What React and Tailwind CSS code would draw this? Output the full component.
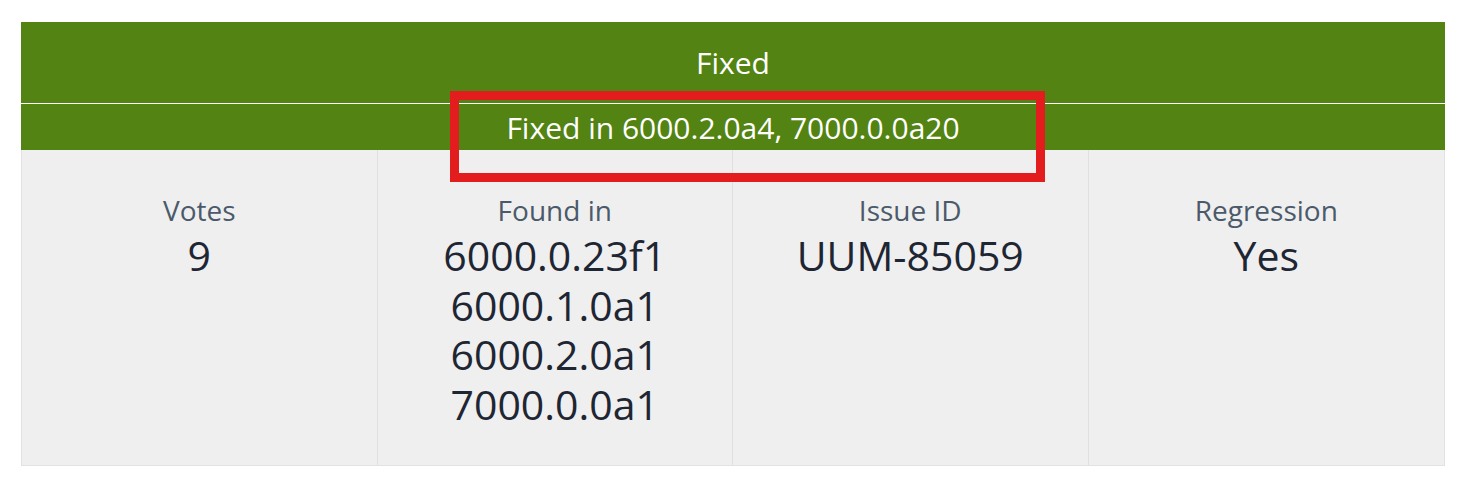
import React from 'react';

const stats = [
  { label: 'Votes', values: ['9'] },
  { label: 'Found in', values: ['6000.0.23f1', '6000.1.0a1', '6000.2.0a1', '7000.0.0a1'] },
  { label: 'Issue ID', values: ['UUM-85059'] },
  { label: 'Regression', values: ['Yes'] },
];

export default function App() {
  return (
    <div className="w-[1462px] h-[492px] bg-white pt-[22px] px-[21px] font-['Open_Sans',sans-serif]">
      <div className="relative w-[1424px]">
        {/* Status header */}
        <div className="bg-[#538312] text-white text-center">
          <div className="h-[82px] flex items-center justify-center text-[30px] border-b border-white">
            Fixed
          </div>
          <div className="h-[46px] flex items-center justify-center text-[30px] leading-none pt-[1px]">
            Fixed in 6000.2.0a4, 7000.0.0a20
          </div>
        </div>

        {/* Stats */}
        <div className="grid grid-cols-4 bg-[#efefef] border border-t-0 border-[#e2e2e2] h-[316px]">
          {stats.map((s, i) => (
            <div
              key={s.label}
              className={`text-center pt-[42px] ${i < 3 ? 'border-r border-[#e0e0e0]' : ''}`}
            >
              <div className="text-[28px] leading-[36px] text-[#4b5a6a] mb-[3px]">{s.label}</div>
              {s.values.map((v) => (
                <div key={v} className="text-[41px] leading-[49.5px] text-[#1f2633]">
                  {v}
                </div>
              ))}
            </div>
          ))}
        </div>

        {/* Annotation box */}
        <div className="absolute left-[429px] top-[69px] w-[595px] h-[91px] border-[9px] border-[#e31c1e]" />
      </div>
    </div>
  );
}
